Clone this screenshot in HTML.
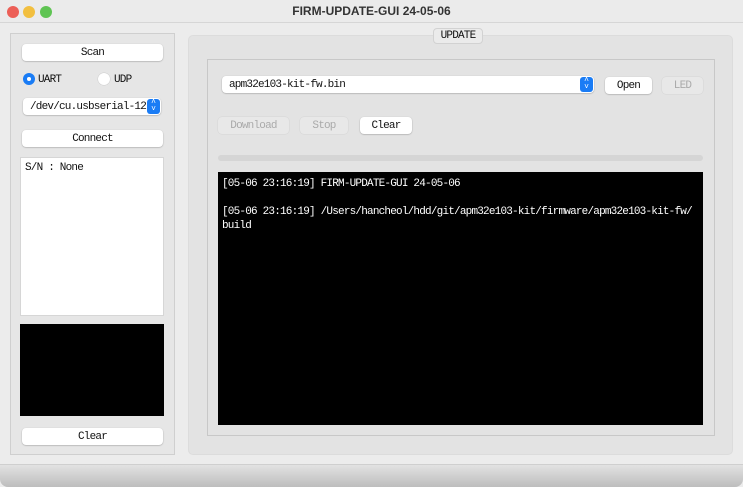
<!DOCTYPE html>
<html><head><style>
*{margin:0;padding:0;box-sizing:border-box}
body{width:743px;height:487px;background:#ececec;position:relative;overflow:hidden;font-family:"Liberation Mono","DejaVu Sans Mono",monospace;font-size:11px;letter-spacing:-0.8px;color:#111}
.a{position:absolute}
.title{left:0;top:0;width:743px;height:23px;background:#ebebeb;border-bottom:1px solid #d6d6d6;text-align:center;font:bold 12px "Liberation Sans",sans-serif;line-height:23px;color:#333;letter-spacing:0}
.dot{width:12px;height:12px;border-radius:50%;top:6px}
.btn{background:#fff;border-radius:4px;box-shadow:0 0.5px 1.5px rgba(0,0,0,.3);text-align:center;line-height:18px;height:17px}
.dis{background:#e8e8e8;color:#aaa;box-shadow:0 0 0 0.5px #d4d4d4}
.blk{background:#000;color:#fff}
</style></head><body>
<div class="a title">FIRM-UPDATE-GUI 24-05-06</div>
<div class="a dot" style="left:7px;background:#ec5f57"></div>
<div class="a dot" style="left:23px;background:#f2bf3f"></div>
<div class="a dot" style="left:40px;background:#5fc453"></div>

<div class="a" style="left:10px;top:33px;width:165px;height:422px;background:#e6e6e6;border:1px solid #cfcfcf"></div>
<div class="a btn" style="left:22px;top:44px;width:141px">Scan</div>
<div class="a" style="left:23px;top:73px;width:12px;height:12px;border-radius:50%;background:#1a7cf5"><div class="a" style="left:4px;top:4px;width:4px;height:4px;border-radius:50%;background:#fff"></div></div>
<div class="a" style="left:38px;top:73px;line-height:14px">UART</div>
<div class="a" style="left:98px;top:73px;width:12px;height:12px;border-radius:50%;background:#fff;box-shadow:0 0 0 0.5px #ccc"></div>
<div class="a" style="left:114px;top:73px;line-height:14px">UDP</div>
<div class="a btn" style="left:23px;top:98px;width:138px;text-align:left;padding-left:7px">/dev/cu.usbserial-12</div>
<div class="a" style="left:147px;top:99px;width:13px;height:15px;border-radius:3px;background:#1a7cf5;color:#fff;font-size:8px;line-height:7px;text-align:center;letter-spacing:0">˄<br>˅</div>
<div class="a btn" style="left:22px;top:130px;width:141px">Connect</div>
<div class="a" style="left:20px;top:157px;width:144px;height:159px;background:#fff;border:1px solid #d6d6d6;padding:4px 4px">S/N : None</div>
<div class="a blk" style="left:20px;top:324px;width:144px;height:92px"></div>
<div class="a btn" style="left:22px;top:428px;width:141px">Clear</div>

<div class="a" style="left:188px;top:35px;width:545px;height:420px;background:#e3e3e3;border-radius:5px;border:1px solid #dcdcdc"></div>
<div class="a" style="left:433px;top:28px;width:50px;height:16px;background:#ebebeb;border:1px solid #d2d2d2;border-radius:4px;text-align:center;line-height:15px">UPDATE</div>
<div class="a" style="left:207px;top:59px;width:508px;height:377px;border:1px solid #c8c8c8;background:#e3e3e3"></div>
<div class="a btn" style="left:222px;top:76px;width:372px;text-align:left;padding-left:7px">apm32e103-kit-fw.bin</div>
<div class="a" style="left:580px;top:77px;width:13px;height:15px;border-radius:3px;background:#1a7cf5;color:#fff;font-size:8px;line-height:7px;text-align:center;letter-spacing:0">˄<br>˅</div>
<div class="a btn" style="left:605px;top:77px;width:47px">Open</div>
<div class="a btn dis" style="left:662px;top:77px;width:41px">LED</div>
<div class="a btn dis" style="left:218px;top:117px;width:71px">Download</div>
<div class="a btn dis" style="left:300px;top:117px;width:48px">Stop</div>
<div class="a btn" style="left:360px;top:117px;width:52px">Clear</div>
<div class="a" style="left:218px;top:155px;width:485px;height:6px;background:#d5d5d5;border-radius:3px"></div>
<div class="a blk" style="left:218px;top:172px;width:485px;height:253px;padding:5px 4px;line-height:14px">[05-06 23:16:19] FIRM-UPDATE-GUI 24-05-06<br><br>[05-06 23:16:19] /Users/hancheol/hdd/git/apm32e103-kit/firmware/apm32e103-kit-fw/<br>build</div>

<div class="a" style="left:0;top:464px;width:743px;height:23px;background:linear-gradient(#e2e2e2,#bdbdbd);border-top:1px solid #cfcfcf;border-radius:0 0 8px 8px"></div>
</body></html>
